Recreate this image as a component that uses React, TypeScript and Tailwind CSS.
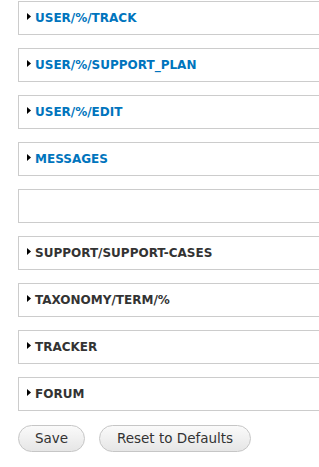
const sections = [
  { label: 'USER/%/TRACK', link: true },
  { label: 'USER/%/SUPPORT_PLAN', link: true },
  { label: 'USER/%/EDIT', link: true },
  { label: 'MESSAGES', link: true },
  { label: '', link: false },
  { label: 'SUPPORT/SUPPORT-CASES', link: false },
  { label: 'TAXONOMY/TERM/%', link: false },
  { label: 'TRACKER', link: false },
  { label: 'FORUM', link: false },
]

function Arrow() {
  return (
    <svg width="4" height="7" viewBox="0 0 4 7" className="shrink-0 mb-[3px]">
      <path d="M0 0 L4 3.5 L0 7 Z" fill="#000" />
    </svg>
  )
}

export default function App() {
  return (
    <div
      className="bg-white w-[319px] h-[467px] overflow-hidden pt-px pl-[18px]"
      style={{ fontFamily: '"DejaVu Sans", "Liberation Sans", sans-serif' }}
    >
      <div className="flex flex-col gap-[13px]">
        {sections.map((s, i) => (
          <div
            key={i}
            className="h-[34px] w-[320px] border border-r-0 border-[#cccccc] flex items-center pl-[8px] gap-[4px]"
          >
            {s.label && (
              <>
                <Arrow />
                <span
                  className={`text-[12px] leading-none font-bold ${
                    s.link ? 'text-[#0074bd]' : 'text-[#333333]'
                  }`}
                >
                  {s.label}
                </span>
              </>
            )}
          </div>
        ))}
      </div>
      <div className="flex gap-[14px] mt-[14px]">
        <button className="h-[27px] w-[67px] rounded-full border border-[#c6c6c6] bg-gradient-to-b from-[#fafafa] to-[#e6e6e6] text-[13.5px] text-[#333]">
          Save
        </button>
        <button className="h-[27px] w-[152px] rounded-full border border-[#c6c6c6] bg-gradient-to-b from-[#fafafa] to-[#e6e6e6] text-[13.5px] text-[#333]">
          Reset to Defaults
        </button>
      </div>
    </div>
  )
}
